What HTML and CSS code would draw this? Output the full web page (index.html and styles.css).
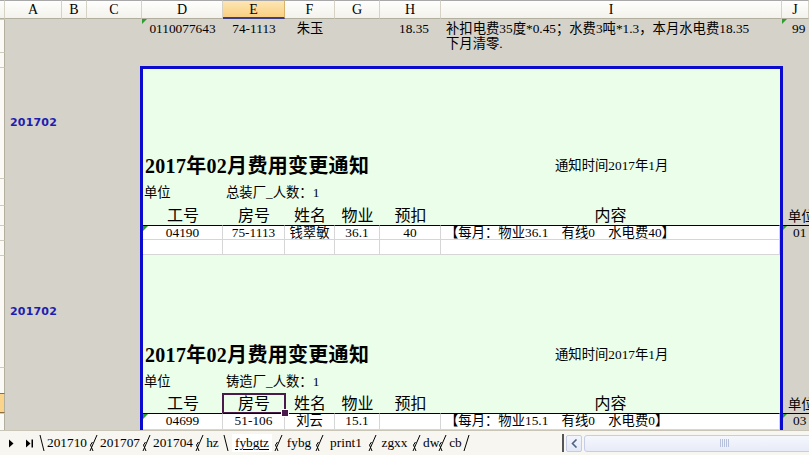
FILE: index.html
```html
<!DOCTYPE html>
<html>
<head>
<meta charset="utf-8">
<title>fybgtz</title>
<link rel="stylesheet" href="styles.css">
</head>
<body>
<div class="app">
  <div class="sheet">
    <div class="grid">
      <!-- column headers -->
      <div class="ch"></div>
      <div class="ch">A</div>
      <div class="ch">B</div>
      <div class="ch">C</div>
      <div class="ch">D</div>
      <div class="ch sel">E</div>
      <div class="ch">F</div>
      <div class="ch">G</div>
      <div class="ch">H</div>
      <div class="ch">I</div>
      <div class="ch">J</div>

      <!-- row: previous record -->
      <div class="rh"></div>
      <div class="c"></div>
      <div class="c"></div>
      <div class="c"></div>
      <div class="c r1 tri">0110077643</div>
      <div class="c r1">74-1113</div>
      <div class="c r1">朱玉</div>
      <div class="c r1"></div>
      <div class="c r1 num">18.35</div>
      <div class="c r1 txt">补扣电费35度*0.45；水费3吨*1.3，本月水电费18.35<br>下月清零.</div>
      <div class="c r1 jv tri">99</div>

      <!-- empty row -->
      <div class="rh"></div>
      <div class="c all"></div>

      <!-- notice frame -->
      <div class="box">
        <div class="title">2017年02月费用变更通知</div>
        <div class="notice">通知时间2017年1月</div>

        <div class="unit">单位</div>
        <div class="unit2">总装厂_人数：1</div>

        <div class="hd">工号</div>
        <div class="hd">房号</div>
        <div class="hd">姓名</div>
        <div class="hd">物业</div>
        <div class="hd">预扣</div>
        <div class="hd">内容</div>

        <div class="dc first tri">04190</div>
        <div class="dc first">75-1113</div>
        <div class="dc first">钱翠敏</div>
        <div class="dc first">36.1</div>
        <div class="dc first">40</div>
        <div class="dc first dtxt">【每月：物业36.1&ensp;&ensp;有线0&ensp;&ensp;水电费40】</div>

        <div class="dc"></div>
        <div class="dc"></div>
        <div class="dc"></div>
        <div class="dc"></div>
        <div class="dc"></div>
        <div class="dc"></div>

        <div class="title">2017年02月费用变更通知</div>
        <div class="notice">通知时间2017年1月</div>

        <div class="unit">单位</div>
        <div class="unit2">铸造厂_人数：1</div>

        <div class="hd">工号</div>
        <div class="hd cursor">房号</div>
        <div class="hd">姓名</div>
        <div class="hd">物业</div>
        <div class="hd">预扣</div>
        <div class="hd">内容</div>

        <div class="dc first tri">04699</div>
        <div class="dc first">51-106</div>
        <div class="dc first">刘云</div>
        <div class="dc first">15.1</div>
        <div class="dc first"></div>
        <div class="dc first dtxt">【每月：物业15.1&ensp;&ensp;有线0&ensp;&ensp;水电费0】</div>

        <div class="dc wide"></div>
      </div>

      <!-- rows alongside the frame: row header, A, B-C, J -->
      <div class="rh"></div><div class="c ac">201702</div><div class="c bc"></div><div class="c"></div>
      <div class="rh"></div><div class="c ac"></div><div class="c bc"></div><div class="c"></div>
      <div class="rh"></div><div class="c ac"></div><div class="c bc"></div><div class="c jt">单位</div>
      <div class="rh"></div><div class="c ac"></div><div class="c bc"></div><div class="c jd tri">01</div>
      <div class="rh"></div><div class="c ac"></div><div class="c bc"></div><div class="c"></div>
      <div class="rh"></div><div class="c ac">201702</div><div class="c bc"></div><div class="c"></div>
      <div class="rh"></div><div class="c ac"></div><div class="c bc"></div><div class="c"></div>
      <div class="rh cur"></div><div class="c ac"></div><div class="c bc"></div><div class="c jt">单位</div>
      <div class="rh"></div><div class="c ac"></div><div class="c bc"></div><div class="c jd tri">03</div>
      <div class="rh"></div><div class="c ac"></div><div class="c bc"></div><div class="c"></div>
    </div>
  </div>

  <div class="tabbar">
    <div class="tabarea">
      <div class="nav">
        <svg width="7" height="9" viewBox="0 0 7 9"><path d="M1 0.5 L5.5 4.5 L1 8.5 Z" fill="#000"/></svg>
        <svg width="9" height="9" viewBox="0 0 9 9"><path d="M1 0.5 L5.5 4.5 L1 8.5 Z" fill="#000"/><rect x="6.5" y="0.5" width="1.5" height="8" fill="#000"/></svg>
      </div>
      <div class="tabs">
        <svg class="edge" width="9" height="20" viewBox="0 0 9 20"><path d="M2 2 L6 18" stroke="#000" fill="none"/></svg>
        <span class="tab w6">201710</span>
        <svg class="sep" width="13" height="20" viewBox="0 0 13 20"><path d="M3 18 L10 2" stroke="#000" fill="none"/><path d="M5.5 9 L3.5 12 L6 18" stroke="#000" fill="none"/></svg>
        <span class="tab w6">201707</span>
        <svg class="sep" width="13" height="20" viewBox="0 0 13 20"><path d="M3 18 L10 2" stroke="#000" fill="none"/><path d="M5.5 9 L3.5 12 L6 18" stroke="#000" fill="none"/></svg>
        <span class="tab w6">201704</span>
        <svg class="sep" width="13" height="20" viewBox="0 0 13 20"><path d="M3 18 L10 2" stroke="#000" fill="none"/><path d="M5.5 9 L3.5 12 L6 18" stroke="#000" fill="none"/></svg>
        <span class="tab w2">hz</span>
        <svg class="sep" width="13" height="20" viewBox="0 0 13 20"><path d="M5 2 L9 18" stroke="#000" fill="none"/></svg>
        <span class="tab w6 active">fybgtz</span>
        <svg class="sep" width="13" height="20" viewBox="0 0 13 20"><path d="M3 18 L10 2" stroke="#000" fill="none"/><path d="M5.5 9 L3.5 12 L6 18" stroke="#000" fill="none"/></svg>
        <span class="tab w4">fybg</span>
        <svg class="sep" width="13" height="20" viewBox="0 0 13 20"><path d="M3 18 L10 2" stroke="#000" fill="none"/><path d="M5.5 9 L3.5 12 L6 18" stroke="#000" fill="none"/></svg>
        <span class="tab w6">print1</span>
        <svg class="sep" width="13" height="20" viewBox="0 0 13 20"><path d="M3 18 L10 2" stroke="#000" fill="none"/><path d="M5.5 9 L3.5 12 L6 18" stroke="#000" fill="none"/></svg>
        <span class="tab w5">zgxx</span>
        <svg class="sep" width="13" height="20" viewBox="0 0 13 20"><path d="M3 18 L10 2" stroke="#000" fill="none"/><path d="M5.5 9 L3.5 12 L6 18" stroke="#000" fill="none"/></svg>
        <span class="tab w2">dw</span>
        <svg class="sep" width="13" height="20" viewBox="0 0 13 20"><path d="M3 18 L10 2" stroke="#000" fill="none"/><path d="M5.5 9 L3.5 12 L6 18" stroke="#000" fill="none"/></svg>
        <span class="tab w2">cb</span>
        <svg class="edge" width="9" height="20" viewBox="0 0 9 20"><path d="M2 18 L7 2" stroke="#000" fill="none"/></svg>
      </div>
    </div>
    <div class="splitter"></div>
    <div class="hscroll">
      <div class="sbtn"><svg width="7" height="9" viewBox="0 0 7 9"><path d="M5.5 0.5 L1.5 4.5 L5.5 8.5" stroke="#4d6185" stroke-width="1.6" fill="none"/></svg></div>
      <div class="thumb"><svg width="9" height="8" viewBox="0 0 9 8"><path d="M0.5 0 V8 M2.5 0 V8 M4.5 0 V8 M6.5 0 V8 M8.5 0 V8" stroke="#b7c1dc" stroke-width="1"/></svg></div>
    </div>
  </div>
</div>
</body>
</html>
```

FILE: styles.css
```css
* { box-sizing: border-box; }

html, body {
  margin: 0;
  padding: 0;
}

body {
  width: 809px;
  height: 455px;
  overflow: hidden;
  background: #d5d2ca;
  font-family: "Liberation Serif", "Noto Sans CJK SC", serif;
  font-size: 13.33px;
  color: #000;
}

.app {
  display: flex;
  flex-direction: column;
  height: 455px;
}

.sheet {
  flex: none;
  height: 430px;
  overflow: hidden;
}

.grid {
  display: grid;
  grid-template-columns: 5px 57px 25px 55px 81px 62px 50px 45px 61px 341px 27px;
  grid-template-rows: 19px 33px 15px 111px 27px 20px 15px 15px 112px 26px 20px 17px 20px;
}

/* column headers */
.ch {
  background: linear-gradient(#fefefd, #f3f2ec);
  border-top: 1px solid #a8a8a8;
  border-right: 1px solid #d6d3c6;
  border-bottom: 1px solid #b2af9f;
  display: flex;
  align-items: center;
  justify-content: center;
  font-size: 14px;
  line-height: 1;
  padding-top: 1px;
}

.ch.sel {
  background: linear-gradient(#fde6b4, #f8cf82);
  border-bottom: 2px solid #3a3f86;
  border-right-color: #d9b36a;
}

/* row headers */
.rh {
  background: #fbfaf6;
  border-right: 1px solid #b2af9f;
  border-top: 1px solid #cfccbe;
}

.rh.cur {
  background: #f9d48a;
  border-top-color: #8d6f3c;
  border-bottom: 1px solid #8d6f3c;
}

/* generic cells */
.c {
  position: relative;
  white-space: nowrap;
}

.all { grid-column: span 10; }
.bc { grid-column: span 2; }

.r1 {
  padding-top: 2px;
  line-height: 15px;
  text-align: center;
}

.r1.num {
  text-align: right;
  padding-right: 12px;
}

.r1.txt {
  text-align: left;
  padding-left: 5px;
}

.r1.jv {
  text-align: left;
  padding-left: 10px;
}

.ac {
  display: flex;
  align-items: center;
  justify-content: center;
  font-family: "DejaVu Sans", sans-serif;
  font-weight: bold;
  font-size: 11px;
  color: #1d1db0;
  letter-spacing: 0.2px;
}

.jt {
  display: flex;
  align-items: center;
  padding-left: 6px;
  overflow: hidden;
}

.jd {
  border-top: 1px solid #000;
  padding-left: 11px;
  line-height: 14px;
}

/* number-as-text marker */
.tri::before {
  content: "";
  position: absolute;
  left: 0;
  top: 0;
  border-top: 5px solid #2e9e2e;
  border-right: 5px solid transparent;
}

/* notice frame */
.box {
  grid-column: 5 / 11;
  grid-row: 4 / 14;
  margin: -1px -1px 0 -2px;
  border: 3px solid #0b0bd0;
  border-bottom: none;
  background: #eafeea;
  position: relative;
  z-index: 1;
  display: grid;
  grid-template-columns: 80px 62px 50px 45px 61px 339px;
  grid-template-rows: 109px 27px 20px 15px 15px 112px 26px 20px 17px 20px;
}

.title {
  grid-column: span 5;
  display: flex;
  align-items: flex-end;
  padding-left: 2px;
  font-size: 20px;
  font-weight: bold;
  line-height: 24px;
  white-space: nowrap;
  letter-spacing: 0.3px;
}

.notice {
  display: flex;
  align-items: flex-end;
  padding-left: 114px;
  padding-bottom: 4px;
  line-height: 16px;
  white-space: nowrap;
}

.unit {
  display: flex;
  align-items: center;
  padding-left: 1px;
}

.unit2 {
  grid-column: span 5;
  display: flex;
  align-items: center;
  padding-left: 3px;
  white-space: nowrap;
}

.hd {
  position: relative;
  font-family: "Noto Sans CJK SC", sans-serif;
  font-size: 16px;
  line-height: 19px;
  text-align: center;
}

.hd.cursor::after {
  content: "";
  position: absolute;
  left: -1px;
  top: 0;
  right: -1px;
  bottom: -1px;
  border: 2px solid #4b1a4d;
}

.hd.cursor::before {
  content: "";
  position: absolute;
  right: -4px;
  bottom: -4px;
  width: 6px;
  height: 6px;
  background: #4b1a4d;
  border: 1px solid #fff;
  z-index: 2;
}

.dc {
  position: relative;
  background: #fff;
  border-right: 1px solid #d6d6d6;
  border-bottom: 1px solid #d6d6d6;
  text-align: center;
  line-height: 14px;
  white-space: nowrap;
}

.dc.first {
  border-top: 1px solid #000;
}

.dc.dtxt {
  text-align: left;
  padding-left: 4px;
}

.dc.wide {
  grid-column: span 6;
}

/* sheet tabs bar */
.tabbar {
  flex: none;
  height: 25px;
  background: #f7f6f1;
  border-top: 1px solid #c9c6b8;
  display: flex;
  align-items: center;
}

.tabarea {
  width: 562px;
  display: flex;
  align-items: center;
  flex: none;
}

.nav {
  width: 38px;
  display: flex;
  align-items: center;
  gap: 10px;
  padding-left: 8px;
  flex: none;
}

.tabs {
  display: flex;
  align-items: center;
  height: 22px;
}

.tab {
  flex: none;
  line-height: 18px;
  white-space: nowrap;
  text-align: center;
}

.w6 { width: 40px; }
.w5 { width: 31px; }
.w4 { width: 28px; }
.w2 { width: 13px; }

.tab.active {
  background: #fff;
  text-decoration: underline;
  text-underline-offset: 2px;
}

.sep, .edge {
  display: block;
  flex: none;
}

.splitter {
  flex: none;
  width: 3px;
  height: 18px;
  border-left: 2px solid #555;
  margin-right: 1px;
}

.hscroll {
  flex: 1;
  display: flex;
  align-items: center;
  gap: 2px;
  height: 17px;
  overflow: hidden;
}

.sbtn {
  flex: none;
  width: 16px;
  height: 17px;
  background: linear-gradient(#f3f5fc, #e3e8f6);
  border: 1px solid #c4cbe3;
  border-radius: 2px;
  display: flex;
  align-items: center;
  justify-content: center;
}

.thumb {
  flex: none;
  width: 280px;
  height: 17px;
  background: linear-gradient(#f6f7fd, #e7ebf7);
  border: 1px solid #c6cde6;
  border-radius: 3px;
  display: flex;
  align-items: center;
  padding-left: 135px;
}
```
